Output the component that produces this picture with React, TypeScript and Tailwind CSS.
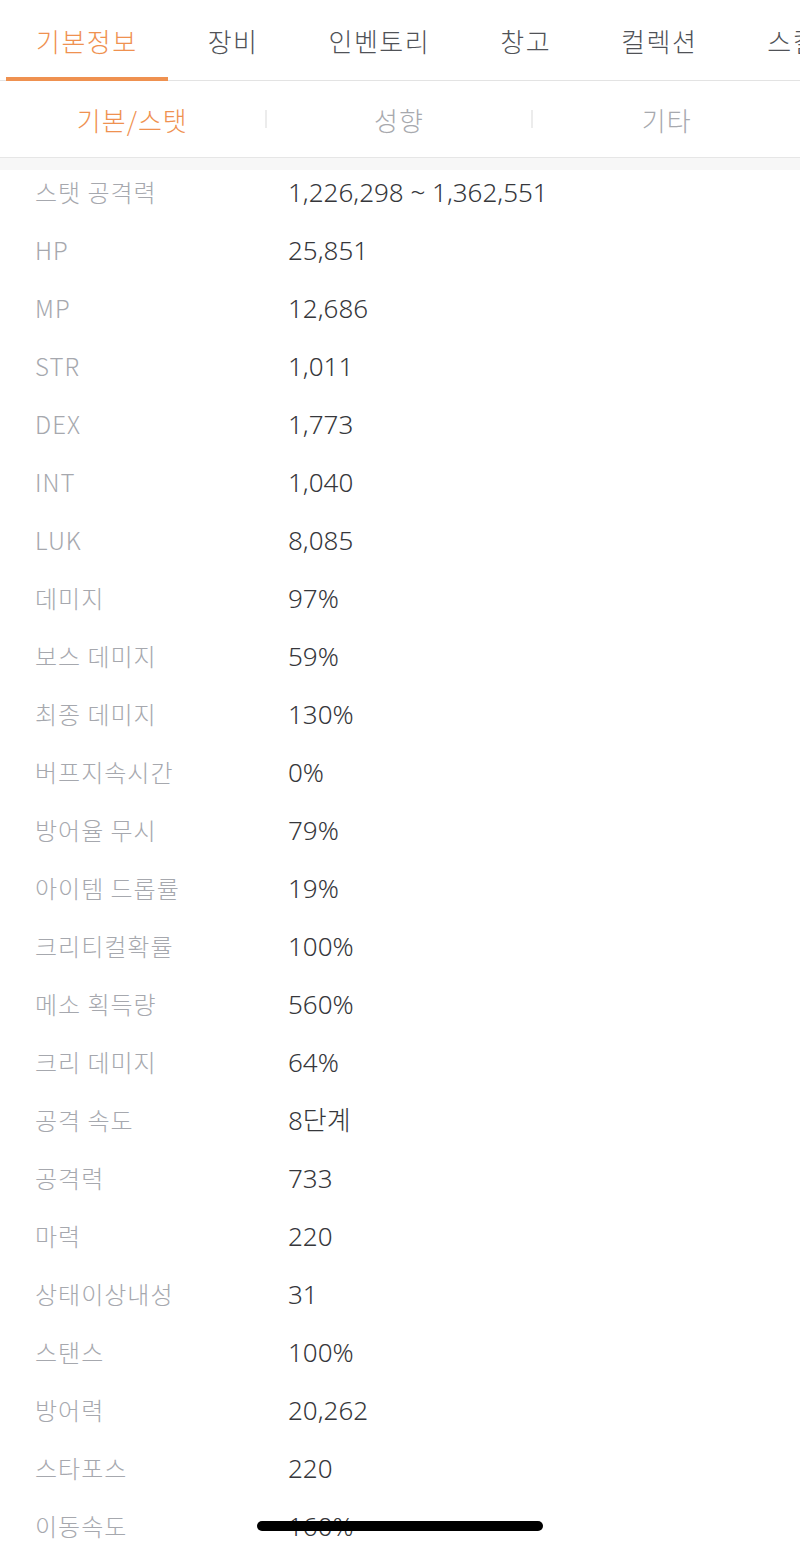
import React from 'react';

const tabs = ['기본정보', '장비', '인벤토리', '창고', '컬렉션', '스킬'];
const subTabs = ['기본/스탯', '성향', '기타'];

const stats: [string, string][] = [
  ['스탯 공격력', '1,226,298 ~ 1,362,551'],
  ['HP', '25,851'],
  ['MP', '12,686'],
  ['STR', '1,011'],
  ['DEX', '1,773'],
  ['INT', '1,040'],
  ['LUK', '8,085'],
  ['데미지', '97%'],
  ['보스 데미지', '59%'],
  ['최종 데미지', '130%'],
  ['버프지속시간', '0%'],
  ['방어율 무시', '79%'],
  ['아이템 드롭률', '19%'],
  ['크리티컬확률', '100%'],
  ['메소 획득량', '560%'],
  ['크리 데미지', '64%'],
  ['공격 속도', '8단계'],
  ['공격력', '733'],
  ['마력', '220'],
  ['상태이상내성', '31'],
  ['스탠스', '100%'],
  ['방어력', '20,262'],
  ['스타포스', '220'],
  ['이동속도', '160%'],
];

const App: React.FC = () => {
  return (
    <div className="relative w-[800px] h-[1547px] overflow-hidden bg-white font-['Noto_Sans','Noto_Sans_CJK_KR',sans-serif]">
      {/* Main tabs */}
      <div className="flex h-[81px] border-b border-[#e3e3e3] pl-[6px] gap-[10px] whitespace-nowrap">
        {tabs.map((t, i) => (
          <div
            key={t}
            className={`flex items-center justify-center px-[30px] h-[81px] -mb-px pt-[4px] text-[26px] tracking-[1.5px] font-light font-['Noto_Sans_CJK_KR',sans-serif] ${
              i === 0 ? 'text-[#ef9150] border-b-[4px] border-[#ef9150]' : 'text-[#505257] border-b-[4px] border-transparent'
            }`}
          >
            {t}
          </div>
        ))}
      </div>

      {/* Sub tabs */}
      <div className="flex h-[77px] border-b border-[#e6e6e6] items-center">
        {subTabs.map((t, i) => (
          <div key={t} className="flex-1 flex items-center relative h-full">
            <div className={`flex-1 text-center text-[26px] tracking-[1px] font-light font-['Noto_Sans_CJK_KR',sans-serif] ${i === 0 ? 'text-[#ef9150]' : 'text-[#a7a9ae]'}`}>
              {t}
            </div>
            {i < subTabs.length - 1 && <div className="w-[2px] h-[18px] bg-[#ececec]" />}
          </div>
        ))}
      </div>

      {/* grey band */}
      <div className="h-[12px] bg-[#f7f7f7]" />

      {/* Stat rows */}
      <div className="flex flex-col">
        {stats.map(([label, value]) => (
          <div key={label} className="flex items-start h-[58px] pt-[8px] leading-[28px] whitespace-nowrap">
            <div className="w-[288px] pl-[35px] text-[24px] tracking-[1px] font-light text-[#a6a8ae] font-['Noto_Sans_CJK_KR',sans-serif]">
              {label}
            </div>
            <div className="text-[26px] font-light text-[#36373b] font-['Noto_Sans','Noto_Sans_CJK_KR',sans-serif]">
              {value}
            </div>
          </div>
        ))}
      </div>

      {/* home indicator */}
      <div className="absolute left-[257px] top-[1521px] w-[286px] h-[10px] rounded-full bg-black" />
    </div>
  );
};

export default App;
